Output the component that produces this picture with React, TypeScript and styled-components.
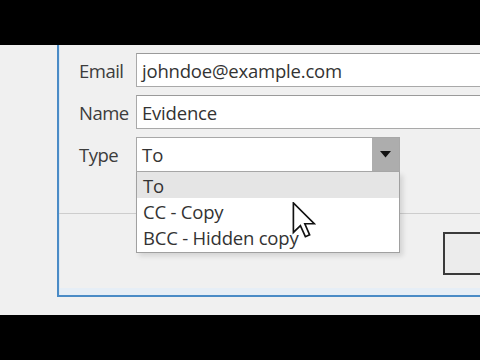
import React from "react";
import styled, { createGlobalStyle } from "styled-components";

const Global = createGlobalStyle`
  html, body { margin: 0; padding: 0; background: #000; overflow: hidden; }
  body { font-family: "Open Sans", "Noto Sans", sans-serif; }
`;

const Frame = styled.div`
  width: 480px;
  height: 360px;
  display: flex;
  flex-direction: column;
  background: #000;
  overflow: hidden;
`;

const Letterbox = styled.div`
  height: 45px;
  flex: none;
  background: #000;
`;

const Desktop = styled.div`
  height: 270px;
  flex: none;
  background: #f0f0f0;
  padding-left: 57px;
  overflow: hidden;
  position: relative;
`;

const Window = styled.div`
  width: 520px;
  height: 252px;
  box-sizing: border-box;
  border-left: 2px solid #4a8bc6;
  border-bottom: 2px solid #4a8bc6;
  background: #f0f0f0;
  box-shadow: inset 1px 0 0 #dbe8f3, inset 0 -7px 0 #e6eef6;
  display: flex;
  flex-direction: column;
`;

const Form = styled.div`
  display: flex;
  flex-direction: column;
  gap: 8px;
  padding: 8px 0 0 20px;
  height: 169px;
  box-sizing: border-box;
  border-bottom: 1px solid #cdcdcd;
  position: relative;
`;

const Row = styled.div`
  display: flex;
  align-items: center;
`;

const Label = styled.span`
  width: 57px;
  flex: none;
  font-size: 18.5px;
  color: #3c3c3c;
  letter-spacing: -0.5px;
`;

const Field = styled.div<{ $h?: number }>`
  flex: 1;
  height: ${(p) => p.$h ?? 34}px;
  box-sizing: border-box;
  background: #fff;
  border: 1px solid #a9a9a9;
  border-top-color: #9a9a9a;
  display: flex;
  align-items: center;
  padding-left: 5px;
  font-size: 18.5px;
  color: #333;
  letter-spacing: -0.2px;
`;

const Combo = styled.div`
  width: 264px;
  height: 35px;
  box-sizing: border-box;
  background: #fff;
  border: 1px solid #a8a8a8;
  display: flex;
  align-items: stretch;
`;

const ComboText = styled.div`
  flex: 1;
  display: flex;
  align-items: center;
  padding-left: 5px;
  font-size: 18.5px;
  color: #333;
`;

const ComboButton = styled.div`
  width: 27px;
  background: #adadad;
  display: flex;
  align-items: center;
  justify-content: center;
`;

const List = styled.div`
  position: absolute;
  left: 77px;
  top: 127px;
  width: 264px;
  height: 81px;
  box-sizing: border-box;
  background: #fff;
  border: 1px solid #a0a0a0;
  border-top: none;
  box-shadow: 3px 3px 5px rgba(0, 0, 0, 0.12);
  z-index: 2;
  display: flex;
  flex-direction: column;
`;

const Item = styled.div<{ $active?: boolean }>`
  height: 26px;
  display: flex;
  align-items: center;
  padding-left: 6px;
  font-size: 18.5px;
  color: #333;
  letter-spacing: -0.2px;
  background: ${(p) => (p.$active ? "#e5e5e5" : "transparent")};
`;

const Footer = styled.div`
  flex: 1;
  display: flex;
  justify-content: flex-start;
  padding: 18px 0 0 384px;
`;

const Button = styled.div`
  width: 130px;
  height: 43px;
  flex: none;
  box-sizing: border-box;
  border: 2px solid #3a3a3a;
  background: #ececec;
`;

const Cursor = styled.svg`
  position: absolute;
  left: 292px;
  top: 157px;
  z-index: 3;
`;

export default function App() {
  return (
    <>
      <Global />
      <Frame>
        <Letterbox />
        <Desktop>
          <Window>
            <Form>
              <Row>
                <Label>Email</Label>
                <Field>johndoe@example.com</Field>
              </Row>
              <Row>
                <Label>Name</Label>
                <Field>Evidence</Field>
              </Row>
              <Row>
                <Label>Type</Label>
                <Combo>
                  <ComboText>To</ComboText>
                  <ComboButton>
                    <svg width="11" height="7" viewBox="0 0 11 7">
                      <path d="M0 0 H11 L5.5 6.5 Z" fill="#111" />
                    </svg>
                  </ComboButton>
                </Combo>
              </Row>
              <List>
                <Item $active>To</Item>
                <Item>CC - Copy</Item>
                <Item>BCC - Hidden copy</Item>
              </List>
            </Form>
            <Footer>
              <Button />
            </Footer>
          </Window>
          <Cursor width="24" height="36" viewBox="0 0 12.5 19.5">
            <path
              d="M0.5 0.5 L0.5 16.5 L4.3 12.8 L7 18.8 L9.3 17.8 L6.7 11.8 L11.8 11.8 Z"
              fill="#fff"
              stroke="#111"
              strokeWidth="0.9"
              strokeLinejoin="miter"
            />
          </Cursor>
        </Desktop>
        <Letterbox />
      </Frame>
    </>
  );
}
